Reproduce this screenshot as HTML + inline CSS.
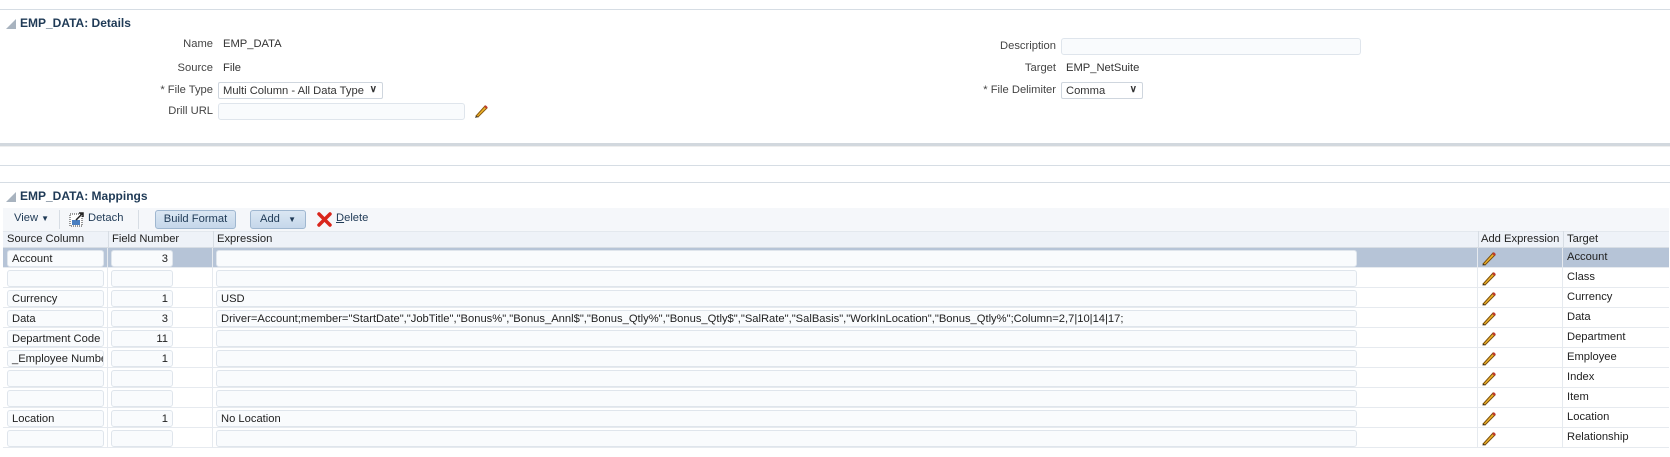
<!DOCTYPE html>
<html><head><meta charset="utf-8"><style>
*{box-sizing:border-box;margin:0;padding:0}
body{width:1670px;height:457px;overflow:hidden;background:#fff;font-family:"Liberation Sans",Tahoma,sans-serif;font-size:11.2px;color:#333;position:relative}
.a{position:absolute;white-space:nowrap}
.hl{position:absolute;left:0;width:1670px;background:#d6dde4}
.title{font-weight:bold;color:#1f3a56;font-size:12px}
.tri{position:absolute;width:0;height:0;border-left:10px solid transparent;border-bottom:10px solid #a8b3bf}
.lbl{position:absolute;text-align:right;color:#444}
.inp{position:absolute;border:1px solid #dfe5ec;border-radius:3px;background:#f9fbfd;height:17px;padding:1px 4px;line-height:14px;white-space:nowrap;overflow:hidden;color:#222}
.sel{position:absolute;border:1px solid #cfd6de;border-radius:2px;background:#fff;height:17px;padding:1px 4px;line-height:14px;white-space:nowrap}
.row{position:absolute;left:3px;width:1666px;height:20px;border-bottom:1px solid #e6eaef}
.cell{position:absolute;top:0;height:20px;border-right:1px solid #e6eaef}
.btn{position:absolute;border:1px solid #9fb7d0;border-radius:3px;background:linear-gradient(#dbe7f3,#c5d7ea);height:19px;line-height:17px;text-align:center;color:#1f3a56}
</style></head><body>
<div class="hl" style="top:9px;height:1px"></div>
<div class="tri" style="left:6px;top:19px"></div>
<div class="a title" style="left:20px;top:16px">EMP_DATA: Details</div>

<div class="lbl" style="left:100px;width:113px;top:38px">Name</div><div class="a" style="left:223px;top:38px">EMP_DATA</div>
<div class="lbl" style="left:100px;width:113px;top:62px">Source</div><div class="a" style="left:223px;top:62px">File</div>
<div class="lbl" style="left:100px;width:113px;top:84px">* File Type</div>
<div class="sel" style="left:218px;top:82px;width:165px">Multi Column - All Data Type <span style="position:absolute;right:5px;top:0;font-size:10px;font-weight:bold">&#8744;</span></div>
<div class="lbl" style="left:100px;width:113px;top:105px">Drill URL</div>
<div class="inp" style="left:218px;top:103px;width:247px"></div>
<svg class="a" style="left:473px;top:103px" width="16" height="16" viewBox="0 0 16 16"><path d="M3 13 L12 3 L14 5 L5 14 Z" fill="#f0b429" stroke="#8a5a10" stroke-width="1"/><path d="M3 13 L2 15 L5 14Z" fill="#333"/><path d="M12 3 L14 5" stroke="#c0392b" stroke-width="2"/></svg>

<div class="lbl" style="left:900px;width:156px;top:40px">Description</div>
<div class="inp" style="left:1061px;top:38px;width:300px"></div>
<div class="lbl" style="left:900px;width:156px;top:62px">Target</div><div class="a" style="left:1066px;top:62px">EMP_NetSuite</div>
<div class="lbl" style="left:900px;width:156px;top:84px">* File Delimiter</div>
<div class="sel" style="left:1061px;top:82px;width:82px">Comma <span style="position:absolute;right:5px;top:0;font-size:10px;font-weight:bold">&#8744;</span></div>

<div class="hl" style="top:143px;height:3px;background:#d2d8de"></div>
<div class="hl" style="top:146px;height:1px;background:#eee"></div>
<div class="hl" style="top:165px;height:1px"></div>
<div class="hl" style="top:182px;height:1px"></div>

<div class="tri" style="left:6px;top:192px"></div>
<div class="a title" style="left:20px;top:189px">EMP_DATA: Mappings</div>

<div class="a" style="left:3px;top:208px;width:1666px;height:23px;background:#f5f7fa"></div>
<div class="a" style="left:14px;top:212px;color:#1f3a56">View <span style="font-size:8px">&#9660;</span></div>
<div class="a" style="left:59px;top:210px;width:1px;height:19px;background:#d7dde4"></div>
<svg class="a" style="left:69px;top:211px" width="16" height="16" viewBox="0 0 16 16"><rect x="1" y="3" width="12" height="12" fill="#fff" stroke="#333" stroke-dasharray="1 1"/><rect x="3" y="9" width="8" height="5" fill="#4a7fc1"/><path d="M7 9 L14 2 M10 2 H14 V6" stroke="#222" stroke-width="1.5" fill="none"/></svg>
<div class="a" style="left:88px;top:212px;color:#1f3a56">Detach</div>
<div class="a" style="left:138px;top:210px;width:1px;height:19px;background:#d7dde4"></div>
<div class="btn" style="left:155px;top:210px;width:81px">Build Format</div>
<div class="btn" style="left:250px;top:210px;width:56px;text-align:left;padding-left:9px">Add <span style="position:absolute;right:9px;font-size:8px">&#9660;</span></div>
<svg class="a" style="left:317px;top:212px" width="15" height="15" viewBox="0 0 15 15"><path d="M2 2 L13 13 M13 2 L2 13" stroke="#d9261c" stroke-width="3.5" stroke-linecap="round"/></svg>
<div class="a" style="left:336px;top:212px;color:#1f3a56"><u>D</u>elete</div>

<div class="a" style="left:3px;top:231px;width:1666px;height:17px;background:#eef2f8;border-bottom:1px solid #d7dde4;border-top:1px solid #e3e8ee"></div>
<div class="a" style="left:7px;top:233px;color:#222">Source Column</div>
<div class="a" style="left:108px;top:231px;width:1px;height:17px;background:#d7dde4"></div>
<div class="a" style="left:112px;top:233px;color:#222">Field Number</div>
<div class="a" style="left:213px;top:231px;width:1px;height:17px;background:#d7dde4"></div>
<div class="a" style="left:217px;top:233px;color:#222">Expression</div>
<div class="a" style="left:1478px;top:231px;width:1px;height:17px;background:#d7dde4"></div>
<div class="a" style="left:1481px;top:233px;color:#222">Add Expression</div>
<div class="a" style="left:1563px;top:231px;width:1px;height:17px;background:#d7dde4"></div>
<div class="a" style="left:1567px;top:233px;color:#222">Target</div>

<div id="rows"></div>
<script>
var d=[["Account","3","","Account"],["","","","Class"],["Currency","1","USD","Currency"],["Data","3",'Driver=Account;member="StartDate","JobTitle","Bonus%","Bonus_Annl$","Bonus_Qtly%","Bonus_Qtly$","SalRate","SalBasis","WorkInLocation","Bonus_Qtly%";Column=2,7|10|14|17;',"Data"],["Department Code","11","","Department"],["_Employee Number","1","","Employee"],["","","","Index"],["","","","Item"],["Location","1","No Location","Location"],["","","","Relationship"]];
var h="";
d.forEach(function(r,i){var y=248+i*20;var bg=i==0?"#b6c4d7":"#fff";
h+='<div class="row" style="top:'+y+'px;background:'+bg+'">';
h+='<div class="cell" style="left:0;width:105px"></div><div class="cell" style="left:105px;width:105px"></div><div class="cell" style="left:210px;width:1265px"></div><div class="cell" style="left:1475px;width:85px"></div></div>';
h+='<div class="inp" style="left:7px;top:'+(y+2)+'px;width:97px">'+r[0]+'</div>';
h+='<div class="inp" style="left:111px;top:'+(y+2)+'px;width:62px;text-align:right">'+r[1]+'</div>';
h+='<div class="inp" style="left:216px;top:'+(y+2)+'px;width:1141px">'+r[2].replace(/</g,"&lt;")+'</div>';
h+='<svg class="a" style="left:1481px;top:'+(y+2)+'px" width="16" height="16" viewBox="0 0 16 16"><path d="M2 14 L12 3 L14 5 L4 15 Z" fill="#f0b429" stroke="#7a4f0e" stroke-width="1"/><path d="M12 3 L14 5" stroke="#c0392b" stroke-width="2.5"/><path d="M2 14 L1.5 15.5 L4 15Z" fill="#222"/></svg>';
h+='<div class="a" style="left:1567px;top:'+(y+3)+'px;color:#222">'+r[3]+'</div>';});
document.getElementById("rows").innerHTML=h;
</script>
</body></html>
